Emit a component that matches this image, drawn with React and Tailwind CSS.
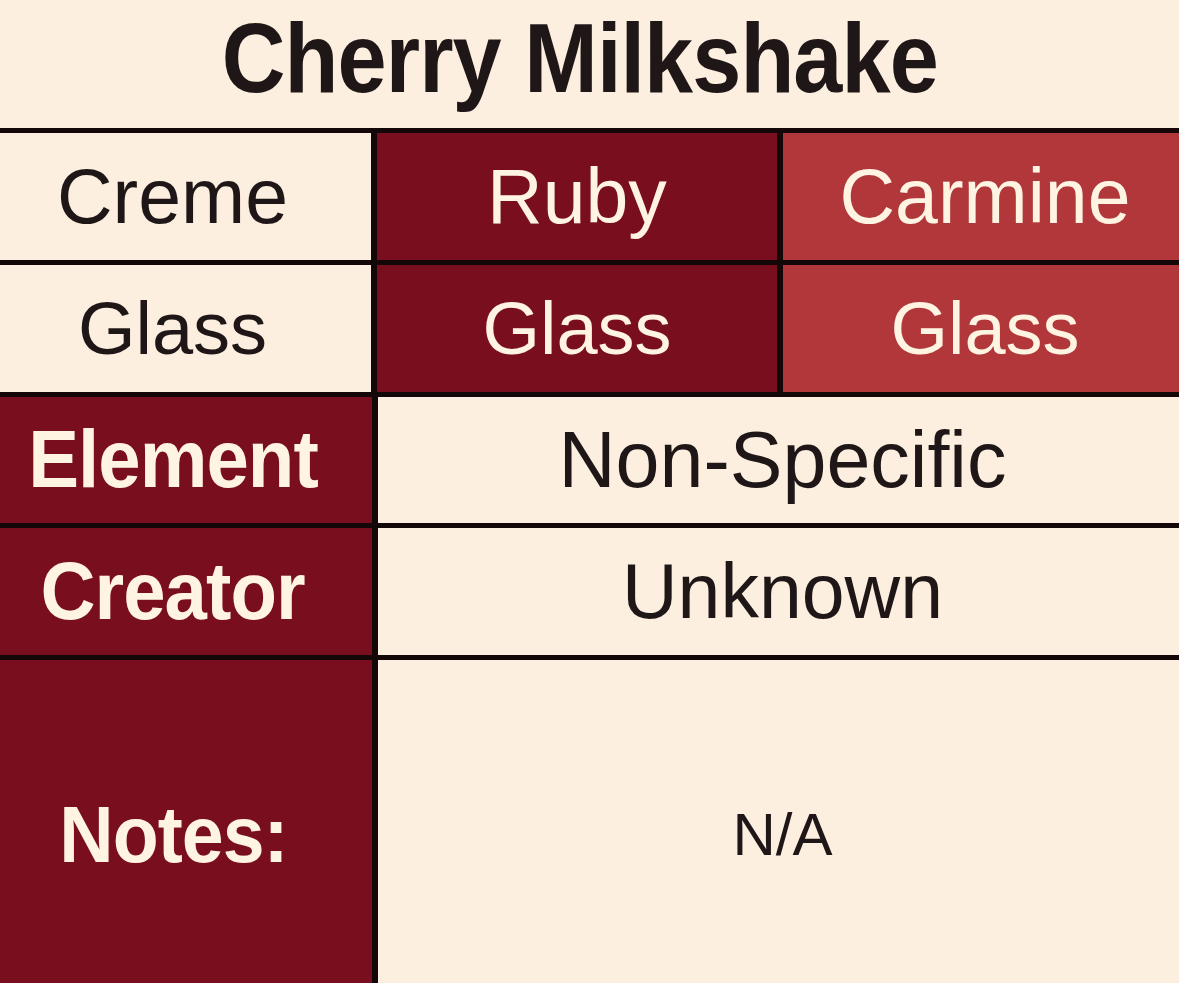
export default function App() {
  const cream = "bg-[#fcefdf]";
  return (
    <main className="w-[1179px] h-[983px] overflow-hidden bg-[#fcefdf] text-[#1f1717] font-['Liberation_Sans',Arial,sans-serif]">
      {/* title */}
      <div className="h-[133px] flex items-center justify-center pb-[12px] pr-[20px] border-b-[5px] border-[#140707]">
        <h1 className="inline-block text-[98px] leading-none font-bold tracking-[-1px] scale-x-[0.9]">
          Cherry Milkshake
        </h1>
      </div>

      {/* colour rows */}
      <div className="flex h-[132px] border-b-[5px] border-[#140707]">
        <div className={`w-[377px] pr-[26px] border-r-[6px] border-[#140707] flex items-center justify-center text-[77px] ${cream}`}>
          Creme
        </div>
        <div className="w-[406px] border-r-[6px] border-[#140707] flex items-center justify-center text-[77px] bg-[#790e1f] text-[#fff3e2]">
          Ruby
        </div>
        <div className="flex-1 pl-[8px] flex items-center justify-center text-[77px] bg-[#b1373b] text-[#fff3e2]">
          Carmine
        </div>
      </div>
      <div className="flex h-[132px] border-b-[5px] border-[#140707]">
        <div className={`w-[377px] pr-[26px] border-r-[6px] border-[#140707] flex items-center justify-center text-[74px] ${cream}`}>
          Glass
        </div>
        <div className="w-[406px] border-r-[6px] border-[#140707] flex items-center justify-center text-[74px] bg-[#790e1f] text-[#fff3e2]">
          Glass
        </div>
        <div className="flex-1 pl-[8px] flex items-center justify-center text-[74px] bg-[#b1373b] text-[#fff3e2]">
          Glass
        </div>
      </div>

      {/* info rows */}
      <div className="flex h-[131px] border-b-[5px] border-[#140707]">
        <div className="w-[378px] pr-[26px] border-r-[6px] border-[#140707] flex items-center justify-center bg-[#790e1f] text-[#fff3e2]">
          <span className="inline-block text-[81px] font-bold tracking-[-1px] scale-x-[0.94]">Element</span>
        </div>
        <div className="flex-1 pl-[8px] flex items-center justify-center text-[79px]">Non-Specific</div>
      </div>
      <div className="flex h-[132px] border-b-[5px] border-[#140707]">
        <div className="w-[378px] pr-[26px] border-r-[6px] border-[#140707] flex items-center justify-center bg-[#790e1f] text-[#fff3e2]">
          <span className="inline-block text-[81px] font-bold tracking-[-1px] scale-x-[0.94]">Creator</span>
        </div>
        <div className="flex-1 pl-[8px] flex items-center justify-center text-[77px]">Unknown</div>
      </div>
      <div className="flex h-[350px]">
        <div className="w-[378px] pr-[26px] border-r-[6px] border-[#140707] flex items-center justify-center bg-[#790e1f] text-[#fff3e2]">
          <span className="inline-block text-[80px] font-bold tracking-[-1px] scale-x-[0.94]">Notes:</span>
        </div>
        <div className="flex-1 pl-[8px] flex items-center justify-center text-[60px]">N/A</div>
      </div>
    </main>
  );
}
